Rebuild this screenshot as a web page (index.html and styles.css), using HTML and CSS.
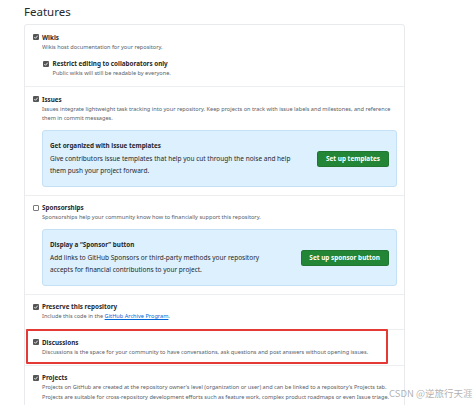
FILE: index.html
```html
<!DOCTYPE html>
<html lang="en">
<head>
<meta charset="utf-8">
<title>Features</title>
<link rel="stylesheet" href="styles.css">
</head>
<body>
<div class="page">
  <h2 class="subhead">Features</h2>
  <div class="box">
    <div class="row">
      <div class="check">
        <span class="cb on"><svg viewBox="0 0 6 6"><path d="M1.3 3.1 L2.5 4.3 L4.7 1.7"/></svg></span>
        <label class="title">Wikis</label>
        <p class="note">Wikis host documentation for your repository.</p>
        <div class="check nested">
          <span class="cb on"><svg viewBox="0 0 6 6"><path d="M1.3 3.1 L2.5 4.3 L4.7 1.7"/></svg></span>
          <label class="title">Restrict editing to collaborators only</label>
          <p class="note">Public wikis will still be readable by everyone.</p>
        </div>
      </div>
    </div>
    <div class="row">
      <div class="check">
        <span class="cb on"><svg viewBox="0 0 6 6"><path d="M1.3 3.1 L2.5 4.3 L4.7 1.7"/></svg></span>
        <label class="title">Issues</label>
        <p class="note">Issues integrate lightweight task tracking into your repository. Keep projects on track with issue labels and milestones, and reference<br>them in commit messages.</p>
        <div class="flash">
          <div class="flash-text">
            <h4 class="flash-title">Get organized with issue templates</h4>
            <p class="flash-body">Give contributors issue templates that help you cut through the noise and help<br>them push your project forward.</p>
          </div>
          <button class="btn">Set up templates</button>
        </div>
      </div>
    </div>
    <div class="row">
      <div class="check">
        <span class="cb off"></span>
        <label class="title">Sponsorships</label>
        <p class="note">Sponsorships help your community know how to financially support this repository.</p>
        <div class="flash">
          <div class="flash-text">
            <h4 class="flash-title">Display a “Sponsor” button</h4>
            <p class="flash-body">Add links to GitHub Sponsors or third-party methods your repository<br>accepts for financial contributions to your project.</p>
          </div>
          <button class="btn">Set up sponsor button</button>
        </div>
      </div>
    </div>
    <div class="row">
      <div class="check">
        <span class="cb on"><svg viewBox="0 0 6 6"><path d="M1.3 3.1 L2.5 4.3 L4.7 1.7"/></svg></span>
        <label class="title">Preserve this repository</label>
        <p class="note">Include this code in the <a class="link" href="#">GitHub Archive Program</a>.</p>
      </div>
    </div>
    <div class="row marked">
      <div class="check">
        <span class="cb on"><svg viewBox="0 0 6 6"><path d="M1.3 3.1 L2.5 4.3 L4.7 1.7"/></svg></span>
        <label class="title">Discussions</label>
        <p class="note">Discussions is the space for your community to have conversations, ask questions and post answers without opening issues.</p>
      </div>
      <div class="highlight"></div>
    </div>
    <div class="row">
      <div class="check">
        <span class="cb on"><svg viewBox="0 0 6 6"><path d="M1.3 3.1 L2.5 4.3 L4.7 1.7"/></svg></span>
        <label class="title">Projects</label>
        <p class="note">Projects on GitHub are created at the repository owner's level (organization or user) and can be linked to a repository's Projects tab.<br>Projects are suitable for cross-repository development efforts such as feature work, complex product roadmaps or even Issue triage.</p>
      </div>
    </div>
  </div>
</div>
<div class="watermark">CSDN @逆旅行天涯</div>
</body>
</html>
```
FILE: styles.css
```css
html, body {
  margin: 0;
  padding: 0;
  background: #ffffff;
}
body {
  font-family: "Segoe UI", "Noto Sans", "Liberation Sans", sans-serif;
  color: #24292e;
  overflow: hidden;
  height: 405px;
  position: relative;
}
.page {
  padding: 4px 0 0 24px;
}
.subhead {
  margin: 0 0 4px 0;
  font-size: 11.5px;
  line-height: 16px;
  font-weight: 400;
  color: #24292e;
}
.box {
  width: 381px;
  box-sizing: border-box;
  border: 1px solid #e8eaed;
  border-radius: 3px;
}
.row {
  padding: 7.5px 7.5px;
  border-top: 1px solid #eceef0;
  position: relative;
}
.row:first-child {
  border-top: 0;
}
.check {
  display: grid;
  grid-template-columns: 9.5px 1fr;
}
.check.nested {
  grid-column: 2;
  margin-top: 7px;
  margin-left: 1px;
}
.cb {
  grid-column: 1;
  grid-row: 1;
  width: 6px;
  height: 6px;
  margin-top: 1.8px;
  box-sizing: border-box;
  border-radius: 1px;
  display: block;
}
.cb svg {
  display: block;
  width: 6px;
  height: 6px;
}
.cb svg path {
  fill: none;
  stroke: #f4f4f4;
  stroke-width: 0.9;
}
.cb.on {
  background: #555555;
}
.cb.off {
  background: #ffffff;
  border: 0.7px solid #7a7a7a;
}
.title {
  grid-column: 2;
  grid-row: 1;
  font-size: 6.3px;
  line-height: 9.5px;
  font-weight: 700;
  color: #24292e;
}
.note {
  grid-column: 2;
  margin: 0.5px 0 0 0;
  font-size: 5.6px;
  line-height: 9.5px;
  color: #586069;
}
.link {
  color: #0366d6;
  text-decoration: underline;
}
.flash {
  grid-column: 2;
  margin-top: 6.5px;
  display: flex;
  align-items: center;
  justify-content: space-between;
  padding: 10px 7px 10px 7px;
  background: #ddf0fd;
  border: 1px solid #c4e0f5;
  border-radius: 3px;
}
.flash-title {
  margin: 0 0 3px 0;
  font-size: 6.3px;
  line-height: 9px;
  font-weight: 700;
  color: #24292e;
}
.flash-body {
  margin: 0;
  font-size: 6.5px;
  line-height: 11.5px;
  color: #24292e;
}
.btn {
  flex: none;
  height: 16px;
  padding: 0 7.5px;
  font-family: inherit;
  font-size: 6.4px;
  line-height: 14px;
  font-weight: 700;
  color: #ffffff;
  background: #238636;
  border: 1px solid rgba(27, 31, 35, 0.15);
  border-radius: 2.5px;
}
.highlight {
  position: absolute;
  left: 1px;
  top: -1px;
  width: 362px;
  height: 35px;
  box-sizing: border-box;
  border: 2px solid #e53935;
  border-radius: 1px;
  pointer-events: none;
}
.watermark {
  position: absolute;
  left: 389px;
  top: 387px;
  font-family: "Noto Sans CJK SC", "Noto Sans", sans-serif;
  font-size: 9.5px;
  line-height: 12px;
  color: rgba(150, 150, 150, 0.75);
  white-space: nowrap;
}
```
